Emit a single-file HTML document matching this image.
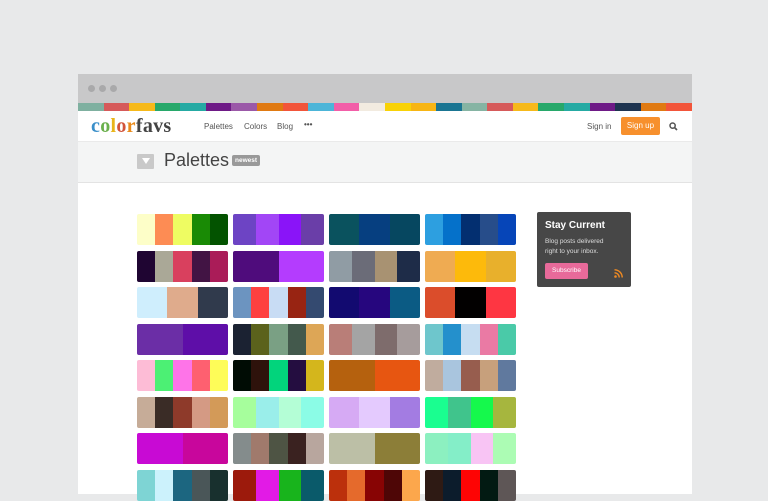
<!DOCTYPE html><html><head><style>
*{margin:0;padding:0;box-sizing:border-box}
body{width:768px;height:483px;background:#e8e9ea;font-family:"Liberation Sans",sans-serif;overflow:hidden;position:relative}
.win{position:absolute;left:78px;top:74px;width:614px;height:420px;background:#fff}
.tb{height:29px;background:#c8c8c9;position:relative}
.tb i{position:absolute;top:11px;width:7px;height:7px;border-radius:50%;background:#a9a9aa}
.strip{display:flex;height:8px}.strip div{flex:1}
.nav{height:30px;position:relative;font-size:8px;color:#555}
.nav span{position:absolute;top:11px}
.sub{height:42px;background:#f4f5f5;border-top:1px solid #eaeaea;border-bottom:1px solid #e3e3e3;position:relative}
.p{position:absolute;width:91px;height:31px;display:flex;border-radius:2px;overflow:hidden}
.p div{flex:1}
.side{position:absolute;left:459px;top:138px;width:94px;height:75px;background:#474747;border-radius:2px;color:#fff}
</style></head><body>
<div class="win">
<div class="tb"><i style="left:10px"></i><i style="left:21px"></i><i style="left:32px"></i></div>
<div class="strip">
<div style="background:#7fb0a0"></div><div style="background:#d65a5a"></div><div style="background:#f6b91a"></div><div style="background:#27a86a"></div><div style="background:#25aaa3"></div><div style="background:#6e1a86"></div><div style="background:#9b59a8"></div><div style="background:#e07a12"></div><div style="background:#f2553a"></div><div style="background:#4cb5d8"></div><div style="background:#f25ea8"></div><div style="background:#f2ebe0"></div><div style="background:#f8d207"></div><div style="background:#f7b514"></div><div style="background:#1a7592"></div><div style="background:#86b4a3"></div><div style="background:#d65a5a"></div><div style="background:#f6b91a"></div><div style="background:#27a86a"></div><div style="background:#25aaa3"></div><div style="background:#6e1a86"></div><div style="background:#1e3450"></div><div style="background:#e07a12"></div><div style="background:#f2553a"></div>
</div>
<div class="nav">
<span style="left:13px;top:4px;font:bold 20px 'Liberation Serif',serif;letter-spacing:0.3px"><b style="color:#3a8fc9">c</b><b style="color:#6ab04c">o</b><b style="color:#e9b51a">l</b><b style="color:#d2543a">o</b><b style="color:#e98a1a">r</b><b style="color:#444">favs</b></span>
<span style="left:126px">Palettes</span><span style="left:166px">Colors</span><span style="left:199px">Blog</span><span style="left:226px;font-weight:bold;top:9px">•••</span>
<span style="left:509px">Sign in</span>
<span style="left:543px;top:6px;width:39px;height:18px;background:#f7902d;color:#fff;border-radius:2px;text-align:center;line-height:18px">Sign up</span>
<svg style="position:absolute;left:591px;top:11px" width="9" height="9" viewBox="0 0 9 9"><circle cx="3.6" cy="3.6" r="2.6" fill="none" stroke="#555" stroke-width="1.5"/><path d="M5.5 5.5L8 8" stroke="#555" stroke-width="1.7"/></svg>
</div>
<div class="sub">
<div style="position:absolute;left:59px;top:12px;width:17px;height:15px;background:#c9c9c9;border-radius:1px"><div style="margin:4px auto;width:0;height:0;border-left:4px solid transparent;border-right:4px solid transparent;border-top:6px solid #fff"></div></div>
<div style="position:absolute;left:86px;top:8px;font-size:18px;color:#444">Palettes</div>
<div style="position:absolute;left:154px;top:13px;font-size:6.5px;color:#fff;background:#999;padding:2px 3px;border-radius:2px;font-weight:bold">newest</div>
</div>
<div id="g"></div>
<div class="side">
<div style="position:absolute;left:8px;top:8px;font-size:10px;font-weight:bold">Stay Current</div>
<div style="position:absolute;left:8px;top:25px;font-size:6.5px;line-height:10px;color:#ddd">Blog posts delivered<br>right to your inbox.</div>
<div style="position:absolute;left:8px;top:51px;width:43px;height:16px;background:#e86a9a;border-radius:2px;font-size:6.5px;text-align:center;line-height:16px">Subscribe</div>
<svg style="position:absolute;left:77px;top:57px" width="9" height="9" viewBox="0 0 9 9"><circle cx="1.5" cy="7.5" r="1.3" fill="#f08a22"/><path d="M0.5 3.8A4.7 4.7 0 0 1 5.2 8.5M0.5 0.8A7.7 7.7 0 0 1 8.2 8.5" fill="none" stroke="#f08a22" stroke-width="1.4"/></svg>
</div>
</div>
<script>
var d=[
["#fdfec8,#fd8c54,#eefc62,#198a05,#035300","#6d44c4,#a246f6,#8a14f8,#6a3ea8","#0a525e,#063f80,#064760","#2d9fe0,#0571ca,#032f70,#274d8a,#0645b8"],
["#1f0532,#aaa897,#d9405e,#421444,#aa1c58","#4f0c7c,#b43cfe","#909ca4,#6b6c78,#a89272,#1e2c48","#efab52,#fdba0b,#e8b02c"],
["#cfeefd,#dfab8c,#303a4c","#6c94c0,#fe4040,#c8dcf4,#982412,#344a70","#120a70,#26067e,#0b5b84","#db4d2b,#020000,#fe3642"],
["#6b2ea6,#5e0ea8","#1b2232,#5b621c,#7aa084,#43594c,#dda656","#b97e78,#a4a4a4,#7e6c6c,#a69c9c","#6ec6cc,#2490cc,#c6ddf1,#ea7aa4,#4acaa8"],
["#fdbcd6,#4cf074,#fe74e8,#fe6070,#fefc58","#000c04,#2e120b,#02d47c,#240d40,#d4b61c","#b5610e,#e75611","#c0ac9e,#a9c5de,#975d4e,#c7a07c,#60799e"],
["#c6ac98,#3a2c26,#8e3a2a,#d49a84,#d39a58","#a6fe9c,#9aeeea,#b4fed6,#8bfce6","#d6aaf4,#e4cafe,#a37ce2","#1afe90,#40c48c,#15f94c,#a6b63e"],
["#c80ad4,#c8069c","#848c8c,#a07a6c,#4e5444,#3a2220,#b8a69e","#bcbfa6,#8c7e38","#8cf0c0,#84eec8,#f8c4f4,#acfcb4"],
["#7ed4d4,#ccf2fc,#1c6680,#4a5658,#18302e","#9c1a0c,#e21ae6,#18b41c,#0a5a6a","#bc300c,#e56a2c,#880404,#4e0606,#fca74c","#2e1a14,#0c1c2c,#fe0404,#021a12,#5e5656"]];
var g=document.getElementById('g'),h='';
var xs=[59,155,251,347],ys=[140,177,213,250,286,323,359,396];
d.forEach(function(r,i){r.forEach(function(p,j){h+='<div class="p" style="left:'+xs[j]+'px;top:'+ys[i]+'px">'+p.split(',').map(function(c){return '<div style="background:'+c+'"></div>'}).join('')+'</div>'})});
g.innerHTML=h;
</script>
</body></html>
